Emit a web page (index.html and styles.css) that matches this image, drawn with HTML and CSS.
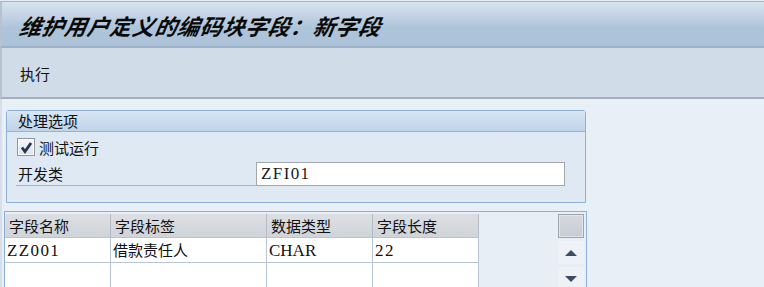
FILE: index.html
```html
<!DOCTYPE html>
<html lang="zh">
<head>
<meta charset="utf-8">
<link rel="stylesheet" href="styles.css">
</head>
<body>
<div class="win">
  <header class="titlebar"><h1 class="title">维护用户定义的编码块字段：新字段</h1></header>
  <div class="toolbar"><span class="tool">执行</span></div>
  <main class="content">
    <section class="group">
      <div class="group-head">处理选项</div>
      <div class="group-body">
        <div class="check-row">
          <span class="checkbox"><svg width="13" height="13" viewBox="0 0 13 13"><path d="M2 6.5 L5 10.5 L11 2" fill="none" stroke="#27364d" stroke-width="2.8" stroke-linejoin="miter"/></svg></span>
          <span class="check-label">测试运行</span>
        </div>
        <div class="field-row">
          <span class="field-label">开发类</span>
          <span class="input code">ZFI01</span>
        </div>
      </div>
    </section>
    <section class="table-wrap">
      <div class="grid">
        <div class="th">字段名称</div>
        <div class="th">字段标签</div>
        <div class="th">数据类型</div>
        <div class="th">字段长度</div>
        <div class="td serif code">ZZ001</div>
        <div class="td">借款责任人</div>
        <div class="td serif">CHAR</div>
        <div class="td serif code">22</div>
        <div class="td"></div>
        <div class="td"></div>
        <div class="td"></div>
        <div class="td"></div>
      </div>
      <div class="spacer"></div>
      <div class="scroll">
        <div class="sb-top"></div>
        <div class="sb-btn"><svg width="14" height="8" viewBox="0 0 14 8"><path d="M7 1 L13 7 L1 7 Z" fill="#3d4c60"/></svg></div>
        <div class="sb-btn"><svg width="14" height="8" viewBox="0 0 14 8"><path d="M1 1 L13 1 L7 7 Z" fill="#3d4c60"/></svg></div>
      </div>
    </section>
  </main>
</div>
</body>
</html>
```

FILE: styles.css
```css
* { box-sizing: border-box; }
html, body { margin: 0; padding: 0; }
body {
  background: #e9eff6;
  font-family: "Noto Sans CJK SC", "Noto Sans", sans-serif;
  font-size: 15px;
  color: #111;
  width: 764px;
  height: 287px;
  overflow: hidden;
}
.win {
  padding-top: 1px;
  background: #e6ecf3;
}
.titlebar {
  height: 47px;
  border-top: 1px solid #a8afbc;
  border-left: 2px solid #b8c2ce;
  border-bottom: 2px solid #9fb1c7;
  background: linear-gradient(to bottom, #d6e4f0 0px, #c3d3e4 14px, #adc4da 26px, #abc2d9 100%);
  display: flex;
  align-items: center;
  padding-left: 18px;
}
.title {
  margin: 0;
  font-size: 22px;
  font-weight: 700;
  font-style: italic;
  letter-spacing: 0.6px;
  color: #0a0a0a;
  line-height: 1;
  transform: skewX(-10deg);
  padding-top: 1px;
}
.toolbar {
  height: 51px;
  background: #d0dde8;
  border-left: 2px solid #b8c2ce;
  border-bottom: 2px solid #a6b0bd;
  display: flex;
  align-items: center;
  padding-left: 18px;
}
.tool { font-size: 15px; line-height: 1; padding-top: 1px; }
.content {
  background: #e9eff6;
  border-left: 2px solid #d5dee9;
  height: 190px;
  padding-top: 11px;
  padding-left: 2px;
}
.group {
  margin-left: 2px;
  width: 580px;
  height: 93px;
  border: 1px solid #8db0d6;
  border-radius: 3px 3px 0 0;
  background: #dfe9f4;
}
.group-head {
  height: 21px;
  background: linear-gradient(to bottom, #d7e5f2, #c0d4e9);
  border-bottom: 1px solid #95b5d8;
  padding-left: 11px;
  line-height: 20px;
  font-size: 15px;
}
.group-body { padding: 5px 0 0 9px; }
.check-row {
  display: flex;
  align-items: center;
  height: 20px;
}
.checkbox {
  width: 18px;
  height: 18px;
  border: 1px solid #8e969f;
  background: linear-gradient(to bottom, #f4f6f8, #dfe4ea);
  box-shadow: inset 0 0 0 1px #fbfcfd;
  display: flex;
  align-items: center;
  justify-content: center;
  margin-left: 1px;
}
.check-label { margin-left: 4px; line-height: 1; }
.field-row {
  display: flex;
  align-items: flex-end;
  margin-top: 5px;
  height: 24px;
}
.field-label {
  width: 240px;
  height: 23px;
  border-bottom: 1px solid #a9b2bc;
  padding-left: 2px;
  line-height: 22px;
}
.input {
  width: 309px;
  height: 24px;
  border: 1px solid #a3a7ab;
  background: #fff;
  font-family: "Liberation Serif", serif;
  font-size: 17px;
  line-height: 22px;
  padding-left: 4px;
  color: #1a1a1a;
}
.code { letter-spacing: 1.4px; }
.table-wrap {
  margin-top: 8px;
  width: 583px;
  height: 80px;
  border: 1px solid #8eb0d6;
  border-bottom: none;
  padding: 2px 2px 0 0;
  display: flex;
  background: #e8eef5;
  overflow: hidden;
}
.grid {
  display: grid;
  grid-template-columns: 106px 156px 106px 106px;
  grid-template-rows: 24px 25px 25px;
  align-content: start;
}
.th {
  background: linear-gradient(to bottom, #dcdfe3, #cfd4da);
  border-right: 1px solid #b3bcc6;
  border-bottom: 1px solid #b9c4d0;
  padding-left: 4px;
  line-height: 23px;
  font-size: 15px;
}
.td {
  background: #fff;
  border-right: 1px solid #b8c5d6;
  border-bottom: 1px solid #b8c5d6;
  padding-left: 2px;
  line-height: 24px;
  font-size: 15px;
}
.td.serif {
  font-family: "Liberation Serif", serif;
  font-size: 17px;
  line-height: 25px;
}
.spacer { flex: 1; }
.scroll {
  width: 26px;
  display: flex;
  flex-direction: column;
}
.sb-top {
  height: 24px;
  border: 1px solid #9ea5ae;
  background: linear-gradient(to bottom, #d6dae0, #c7ccd3);
  box-shadow: inset 0 0 0 1px #e2e5e9;
}
.sb-btn {
  margin-top: 3px;
  height: 24px;
  background: #eef2f7;
  display: flex;
  align-items: center;
  justify-content: center;
}
```
